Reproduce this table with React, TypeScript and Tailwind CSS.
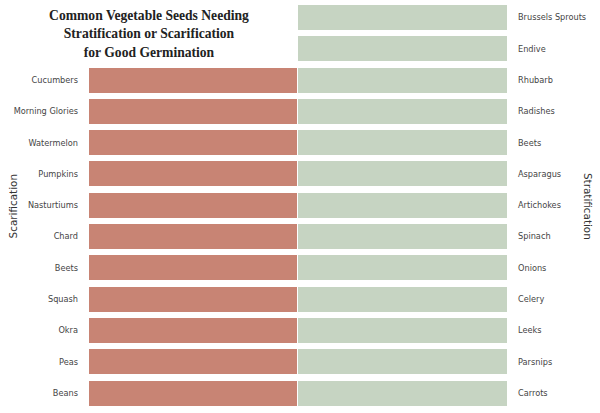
const rows = [
  { left: "", right: "Brussels Sprouts" },
  { left: "", right: "Endive" },
  { left: "Cucumbers", right: "Rhubarb" },
  { left: "Morning Glories", right: "Radishes" },
  { left: "Watermelon", right: "Beets" },
  { left: "Pumpkins", right: "Asparagus" },
  { left: "Nasturtiums", right: "Artichokes" },
  { left: "Chard", right: "Spinach" },
  { left: "Beets", right: "Onions" },
  { left: "Squash", right: "Celery" },
  { left: "Okra", right: "Leeks" },
  { left: "Peas", right: "Parsnips" },
  { left: "Beans", right: "Carrots" },
];

export default function App() {
  return (
    <div className="flex w-[600px] h-[413px] bg-white text-[#454545] font-['DejaVu_Sans',sans-serif] overflow-hidden">
      <div className="w-[28px] flex items-center justify-center">
        <span className="text-[10.4px] text-[#333] [writing-mode:vertical-rl] rotate-180 whitespace-nowrap">
          Scarification
        </span>
      </div>

      <div className="grid grid-cols-[61px_209px_209px_68px] auto-rows-[25px] gap-y-[6.3px] pt-[5px]">
        {/* title sits over the two rows that have no scarification bar */}
        <div className="col-span-2 row-span-2 flex items-center justify-center pr-[28px] pt-[3px]">
          <h1 className="font-['Liberation_Serif',serif] font-bold text-[13.6px] leading-[18.7px] text-[#222] text-center">
            Common Vegetable Seeds Needing
            <br />
            Stratification or Scarification
            <br />
            for Good Germination
          </h1>
        </div>
        {rows.map((r, i) => (
          <Row key={i} left={r.left} right={r.right} first={i < 2} />
        ))}
      </div>

      <div className="w-[25px] flex items-center justify-center">
        <span className="text-[10.4px] text-[#333] [writing-mode:vertical-rl] whitespace-nowrap">
          Stratification
        </span>
      </div>
    </div>
  );
}

function Row({ left, right, first }: { left: string; right: string; first: boolean }) {
  return (
    <>
      {!first && (
        <>
          <div className="flex items-center justify-end pr-[11px] text-[8.2px] whitespace-nowrap">
            {left}
          </div>
          <div className="bg-[#c88474] mr-px" />
        </>
      )}
      <div className="bg-[#c6d4c2] col-start-3" />
      <div className="flex items-center pl-[11px] text-[8.2px] whitespace-nowrap">
        {right}
      </div>
    </>
  );
}
